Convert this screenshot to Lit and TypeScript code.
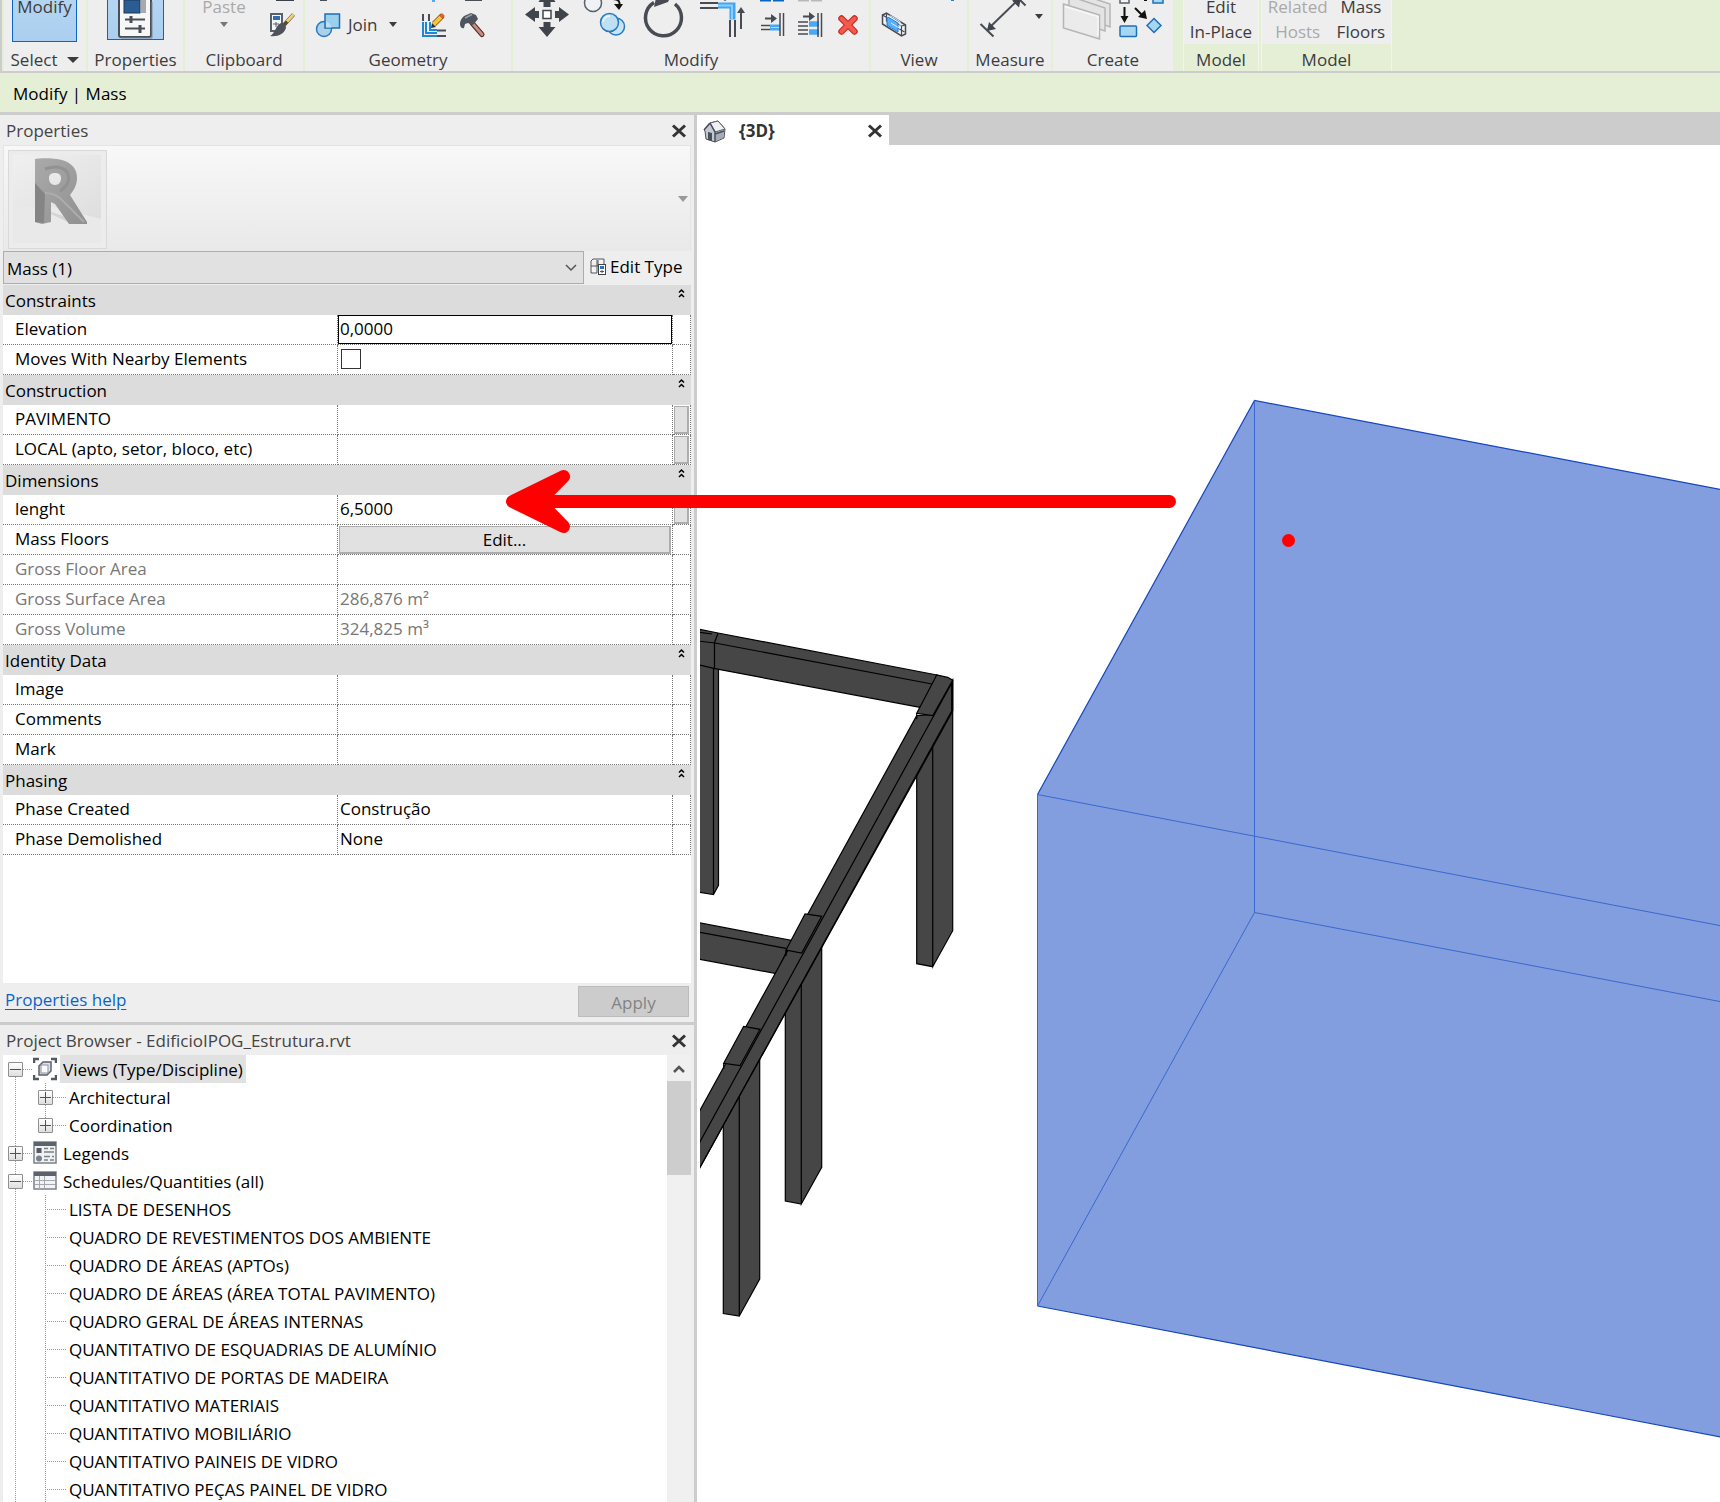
import { LitElement, html, svg, css, nothing, type TemplateResult, type SVGTemplateResult } from "lit";
import { customElement, property } from "lit/decorators.js";
import { classMap } from "lit/directives/class-map.js";

/** Ribbon glyph: all glyphs share the ribbon's own coordinate space, cut to a slice. */
const slice = (x: number, w: number, art: SVGTemplateResult) => html`
  <svg width=${w} height="45" viewBox="${x} 0 ${w} 45" aria-hidden="true">${art}</svg>`;

const cross = html`<svg width="16" height="16" viewBox="0 0 16 16" aria-hidden="true">
  <path d="M2 2.500 14 13.500M14 2.500 2 13.500" stroke="#333" stroke-width="3" fill="none" />
</svg>`;

const ICONS = {
  properties: svg`
    <rect x="119" y="-4" width="32" height="41" rx="2" fill="#f7f7f7" stroke="#4a4e57" stroke-width="2"/>
    <path d="M121 38h31v-36" fill="none" stroke="#7c8794" stroke-width="1"/>
    <rect x="124" y="0" width="16" height="13" fill="#2b5c92" stroke="#16395f"/>
    <rect x="141" y="0" width="5" height="13" fill="#a9a9ad"/>
    <path d="M125 19.500h20M125 28.500h20" stroke="#4a4e57" stroke-width="2"/>
    <path d="M131 16v7M140 25v8" stroke="#4a4e57" stroke-width="3"/>`,
  match: svg`
    <path d="M276 0h18v1h-18z" fill="#3c404c"/>
    <rect x="271" y="14" width="11" height="17" fill="#f4f6f8" stroke="#5a6068" stroke-width="2"/>
    <rect x="273" y="16" width="7" height="4" fill="#2f6db5"/>
    <path d="M273 24h6M276 22v5" stroke="#5a6068"/>
    <path d="M293.500 14.500 284 25" stroke="#5a4a2c" stroke-width="4"/>
    <path d="M293.500 14.500 287 21.500" stroke="#f0cf7a" stroke-width="3"/>
    <path d="M281 23c3 0 5 2 5 5-2 6-8 9-16 8 5-2 5-10 11-13z" fill="#4e525b"/>`,
  join: svg`
    <path d="M320 0h7v1h-7z" fill="#4a4e57"/>
    <circle cx="324" cy="29" r="7.500" fill="#a9d2ea" stroke="#2a7ac0" stroke-width="1.500"/>
    <rect x="325" y="14" width="14.500" height="14" fill="#9bd0ec" stroke="#1c6fb8" stroke-width="1.500"/>
    <path d="M326 21.500a8 8 0 0 1 5.500 6H326z" fill="#bfe0f2"/>`,
  cope: svg`
    <path d="M432 0h3v2h-3z" fill="#55a7f0"/>
    <path d="M423 14v7M429 14v7" stroke="#4a4e57" stroke-width="2"/>
    <path d="M423 22v14h14M426 22v11h11M430 22v8h7" stroke="#1e88d8" stroke-width="2" fill="none"/>
    <path d="M437 30.500h9M437 36h9" stroke="#4a4e57" stroke-width="2"/>
    <path d="m434 24 8.500-8.500" stroke="#7a4a10" stroke-width="5.500"/>
    <path d="m433.500 24.500 7.500-7.500" stroke="#f9c23c" stroke-width="4"/>
    <path d="m431 28 1-5 4 4z" fill="#2d3037"/>
    <path d="m441 17 2.500-2.500" stroke="#e0622c" stroke-width="4"/>`,
  hammer: svg`
    <path d="M465 0h17v1h-17z" fill="#4a4e57"/>
    <path d="m472 23 10 11.500" stroke="#4d2a25" stroke-width="5" stroke-linecap="round"/>
    <path d="m473 24 9 10.500" stroke="#c98b80" stroke-width="3" stroke-linecap="round"/>
    <path d="M460 24c0-3 1-5 4-8l7-3 5 2 2 4-5 6-3-1-2-1-3 1-1 4c-2 1-4-1-4-4z" fill="#4f555e"/>
    <path d="m465 18 7-3.500" stroke="#9aa1a9" stroke-width="1.500"/>`,
  move: svg`
    <g fill="#3f444d"><path d="M525 14.500 535 7v4h4v7h-4v4zM569 14.500 559 7v4h-4v7h4v4z"/>
    <path d="M547 37 538.500 27h5v-5h7v5h5zM538.500 2h17l-2-3h-13zM543.500 2h7v5h-7z"/></g>
    <rect x="543" y="10.500" width="8" height="8" fill="#fff" stroke="#3f444d" stroke-width="1.500"/>`,
  copy: svg`
    <circle cx="593" cy="3" r="8.500" fill="#f0f2f5" stroke="#5a5f68" stroke-width="1.500"/>
    <path d="M613-1c6 0 7 3 6.500 7" stroke="#111" stroke-width="2" fill="none"/><path d="m614 4 9 0-4 6z" fill="#111"/>
    <circle cx="616" cy="26.500" r="8.500" fill="#c6e6f8" stroke="#2a7ac0" stroke-width="1.500"/>
    <circle cx="609.500" cy="22.500" r="9" fill="#bfdff2" stroke="#2a7ac0" stroke-width="1.500"/>
    <path d="M603 22a7 7 0 0 1 7-6" stroke="#e9f7ff" stroke-width="2" fill="none"/>`,
  rotate: svg`
    <path d="M654 2.500A18 18 0 1 0 675 4" stroke="#474b53" stroke-width="3.500" fill="none"/>
    <path d="M656-2h14l-2 4-14 5z" fill="#474b53"/>`,
  trim: svg`
    <path d="M700 3h18M700 8h18" stroke="#474b53" stroke-width="2"/>
    <path d="M718 5.500h14.500v14" stroke="#45a5f5" stroke-width="6" fill="none"/>
    <path d="M718 5.500h14v14" stroke="#8cd0ff" stroke-width="2" fill="none"/>
    <path d="M730 20v17M735 20v17" stroke="#474b53" stroke-width="2"/>
    <path d="M741 29V9" stroke="#474b53" stroke-width="2"/><path d="m737 13 4-6 4 6z" fill="#474b53"/>
    <path d="M722-1h6l-3 2z" fill="#474b53"/>`,
  extendOne: svg`
    <path d="M760 0h11v1.500h-11zM773 0h11v1.500h-11z" fill="#0a66c2"/>
    <path d="M765 18.500h8" stroke="#474b53" stroke-width="2"/><path d="m771 14 6 4.500-6 4.500z" fill="#474b53"/>
    <path d="M761 25.500h9M761 29.500h9" stroke="#474b53" stroke-width="1.500"/>
    <path d="M770 27.500h10" stroke="#4aa8f5" stroke-width="6"/><path d="M771 27.500h9" stroke="#a4d8ff" stroke-width="1"/>
    <path d="M780 13v23M783.500 13v23" stroke="#474b53" stroke-width="1.500"/>`,
  extendMany: svg`
    <path d="M798 0h11v1.500h-11zM811 0h11v1.500h-11z" fill="#b9b9b9"/>
    <path d="M803 16.500h8" stroke="#474b53" stroke-width="2"/><path d="m809 12 6 4.500-6 4.500z" fill="#474b53"/>
    <path d="M798 22h10M798 26h10M798 30h10M798 34h10" stroke="#474b53" stroke-width="1.500"/>
    <path d="M809 24h10M809 32h10" stroke="#4aa8f5" stroke-width="5.500"/>
    <path d="M818 13v24M821.500 13v24" stroke="#474b53" stroke-width="1.500"/>`,
  remove: svg`
    <path d="m841.500 18.500 13 13m0-13-13 13" stroke="#c92f27" stroke-width="6.500" stroke-linecap="round"/>
    <path d="m841.500 18.500 13 13m0-13-13 13" stroke="#f4584f" stroke-width="4" stroke-linecap="round"/>`,
  view: svg`
    <path d="M951 0h3v1h-3z" fill="#1c7fe0"/>
    <path d="m882.500 15 4-2 19 12v9l-4 2-19-12z" fill="#f2f2f2" stroke="#474b53" stroke-width="1.500"/>
    <path d="m882.500 15 19 11v10M901.500 26l4-1M886.500 13v8l18 11" stroke="#474b53" stroke-width="1.200" fill="none"/>
    <path d="m887 16.500 11 6.500v9l-11-7z" fill="#5bb0fb" stroke="#1c7fe0"/>
    <path d="m887 16.500 4-.5 9 5.500v7l-9-5.500" stroke="#d9efff" fill="none"/>`,
  measure: svg`
    <path d="m988 29 32-31" stroke="#474b53" stroke-width="2"/>
    <path d="m980.500 24 13 12.500M1016-4l9.500 9.500" stroke="#474b53" stroke-width="2"/>
    <path d="m987 31 2-9 7 7zM1021-2l-9 2.500 7 7z" fill="#3f444d"/>`,
  assembly: svg`
    <g stroke="#b5b5b5" stroke-width="1.500" fill="#e4e4e4">
    <path d="m1074-8 36 12v23l-36-14z"/><path d="m1069-4 36 12v23l-36-12z"/><path d="m1063.500 4 36 11v24l-36-11z" fill="#ebebeb"/></g>
    <path d="M1065 6.500 1098 16.500v19" stroke="#f8f8f8" stroke-width="1.500" fill="none"/>`,
  group: svg`
    <rect x="1120" y="-6" width="9" height="9" fill="#f3f3f3" stroke="#5a5f68" stroke-width="1.500"/>
    <rect x="1153" y="-7" width="10" height="10" fill="#a7d6f0" stroke="#1c6fb8" stroke-width="1.500"/>
    <path d="M1144-1h3v2h-3z" fill="#111"/>
    <path d="M1124.500 7v10M1135 8l7 7" stroke="#111" stroke-width="2"/>
    <path d="M1120.500 16h8l-4 7zM1147 19l-9-2 7-7z" fill="#111"/>
    <rect x="1120" y="26" width="16.500" height="10.500" rx="1" fill="#a7d6f0" stroke="#1c6fb8" stroke-width="1.500"/>
    <path d="m1154 18.500 7 7-7 7-7-7z" fill="#a7d6f0" stroke="#1c6fb8" stroke-width="1.500"/>`,
};

const BASE = css`
  :host { font-family: "Open Sans", "Noto Sans", sans-serif; font-size: 17px; line-height: 24px; color: #000; }
  * { box-sizing: border-box; }
  svg { display: block; flex: none; }
  button { font: inherit; color: inherit; background: none; border: 0; padding: 0; cursor: pointer; }
  input, select { font: inherit; color: inherit; }
`;

@customElement("ribbon-bar")
class RibbonBar extends LitElement {
  static styles = [BASE, css`
    :host { display: flex; height: 73px; overflow: hidden; background: #e5efd6; border-bottom: 2px solid #ccc; border-left: 2px solid #ccc; padding-left: 2px; color: #3c3c3c; }
    .panel { display: flex; flex: none; flex-direction: column; background: #eee; border-right: 2px solid #e5efd6; }
    .tools { display: flex; height: 45px; align-items: flex-start; }
    .title { display: flex; height: 26px; align-items: center; justify-content: center; gap: 10px; padding-top: 3px; line-height: 23px; }
    .w82 { width: 84px; } .w95 { width: 97px; } .w118 { width: 120px; } .w206 { width: 208px; }
    .w356 { width: 358px; } .w96 { width: 98px; } .w120 { width: 122px; }
    .inset { padding: 0 8px; }
    .centred { justify-content: center; }
    .active { border: 1px solid #0a66c2; border-top: 0; background: linear-gradient(#b4d5f2, #abcff0); }
    .modify { width: 65px; height: 42px; display: flex; justify-content: center; }
    .modify span { margin-top: -5px; }
    .palette { width: 57px; height: 40px; overflow: hidden; }
    .stack { display: flex; flex-direction: column; align-items: center; margin-top: -6px; text-align: center; line-height: 25px; }
    .muted { color: #a9a9a9; }
    .caret { width: 0; border: 4px solid transparent; border-top: 5px solid currentColor; border-bottom: 0; }
    .caret.big { border-width: 6px 6px 0; }
    .paste { width: 64px; gap: 3px; margin-left: 7px; }
    .paste .caret { color: #777; }
    .joinBtn { display: flex; width: 93px; height: 45px; align-items: center; gap: 7px; }
    .joinBtn .word { padding-top: 5px; }
    .joinBtn .caret { margin: 4px 0 0 4px; }
    .measure { display: flex; height: 45px; }
    .measure .caret { margin: 14px 0 0 8px; }
    .gap { width: 6px; }
    .model { border-right: 1px solid #f1f5ea; border-left: 1px solid #f1f5ea; background: #e5efd6; margin-left: 2px; }
    .model .tools { height: 44px; background: #eee; }
    .model .title { height: 27px; }
    .one { width: 76px; } .two { width: 131px; }
    .two .tools { gap: 9px; }
  `];

  private panel(title: string, size: string, body: TemplateResult, toolClass = "", extra: unknown = nothing) {
    return html`<section class="panel ${size}" aria-label=${title}>
      <div class="tools ${toolClass}">${body}</div>
      <div class="title"><span>${title}</span>${extra}</div>
    </section>`;
  }

  private tool(name: string, x: number, w: number, art: SVGTemplateResult) {
    return html`<button type="button" aria-label=${name}>${slice(x, w, art)}</button>`;
  }

  render() {
    return html`
      ${this.panel("Select", "w82", html`<button type="button" class="active modify"><span>Modify</span></button>`, "inset", html`<span class="caret big"></span>`)}
      ${this.panel("Properties", "w95", html`<button type="button" class="active palette" aria-label="Properties">${slice(108, 55, ICONS.properties)}</button>`, "centred")}
      ${this.panel("Clipboard", "w118", html`
        <button type="button" class="stack paste muted" disabled><span>Paste</span><span class="caret"></span></button>
        ${this.tool("Match type", 256, 44, ICONS.match)}`)}
      ${this.panel("Geometry", "w206", html`
        <button type="button" class="joinBtn">${slice(313, 28, ICONS.join)}<span class="word">Join</span><span class="caret"></span></button>
        ${this.tool("Cope", 406, 48, ICONS.cope)}${this.tool("Demolish", 454, 40, ICONS.hammer)}`, "inset")}
      ${this.panel("Modify", "w356", html`
        ${this.tool("Move", 521, 56, ICONS.move)}${this.tool("Copy", 577, 58, ICONS.copy)}
        ${this.tool("Rotate", 635, 57, ICONS.rotate)}${this.tool("Trim to corner", 692, 60, ICONS.trim)}
        ${this.tool("Extend one", 752, 38, ICONS.extendOne)}${this.tool("Extend many", 790, 40, ICONS.extendMany)}
        ${this.tool("Delete", 830, 31, ICONS.remove)}`, "inset")}
      ${this.panel("View", "w96", this.tool("Selection box", 879, 80, ICONS.view), "inset")}
      ${this.panel("Measure", "w82", html`<button type="button" class="measure" aria-label="Measure">${slice(977, 50, ICONS.measure)}<span class="caret"></span></button>`, "inset")}
      ${this.panel("Create", "w120", html`${this.tool("Create assembly", 1061, 54, ICONS.assembly)}${this.tool("Create group", 1115, 52, ICONS.group)}`, "inset")}
      <div class="gap"></div>
      ${this.panel("Model", "model one", html`<button type="button" class="stack"><span>Edit</span><span>In-Place</span></button>`, "centred")}
      ${this.panel("Model", "model two", html`
        <button type="button" class="stack muted" disabled><span>Related</span><span>Hosts</span></button>
        <button type="button" class="stack"><span>Mass</span><span>Floors</span></button>`, "centred")}
    `;
  }
}

type Row = { label: string; value?: string; kind?: "boxed" | "check" | "button" | "text"; muted?: boolean; more?: boolean };
type Group = { title: string; rows: Row[] };

const GROUPS: Group[] = [
  { title: "Constraints", rows: [
    { label: "Elevation", value: "0,0000", kind: "boxed" },
    { label: "Moves With Nearby Elements", kind: "check" },
  ] },
  { title: "Construction", rows: [
    { label: "PAVIMENTO", kind: "text", more: true },
    { label: "LOCAL (apto, setor, bloco, etc)", kind: "text", more: true },
  ] },
  { title: "Dimensions", rows: [
    { label: "lenght", value: "6,5000", kind: "text", more: true },
    { label: "Mass Floors", value: "Edit...", kind: "button" },
    { label: "Gross Floor Area", muted: true },
    { label: "Gross Surface Area", value: "286,876 m²", muted: true },
    { label: "Gross Volume", value: "324,825 m³", muted: true },
  ] },
  { title: "Identity Data", rows: [
    { label: "Image" },
    { label: "Comments", kind: "text" },
    { label: "Mark", kind: "text" },
  ] },
  { title: "Phasing", rows: [
    { label: "Phase Created", value: "Construção" },
    { label: "Phase Demolished", value: "None" },
  ] },
];

@customElement("properties-panel")
class PropertiesPanel extends LitElement {
  static styles = [BASE, css`
    :host { display: flex; flex: none; flex-direction: column; background: #eee; padding: 0 3px; border-bottom: 3px solid #ccc; }
    .head { display: flex; height: 30px; align-items: center; justify-content: space-between; padding: 2px 4px 0 3px; color: #444; }
    .preview { display: flex; height: 106px; align-items: center; justify-content: space-between; padding: 1px 2px 0 4px; border: 1px solid #e4e4e4; border-width: 1px 1px 0; background: linear-gradient(#f8f8f8, #e9e9e9); }
    .drop { border: 5px solid transparent; border-top: 6px solid #999; border-bottom: 0; }
    .type { display: flex; height: 34px; align-items: stretch; }
    .pick { position: relative; display: flex; flex: 1; }
    .pick select { flex: 1; appearance: none; border: 1px solid #adadad; border-radius: 0; background: #e1e1e1; padding: 2px 3px 0; margin-bottom: 1px; }
    .pick svg { position: absolute; right: 7px; top: 12px; pointer-events: none; }
    .edit { display: flex; width: 107px; align-items: center; gap: 4px; padding: 0 0 3px 6px; white-space: nowrap; }
    table { width: 100%; table-layout: fixed; border-collapse: separate; border-spacing: 0; background: #fff; }
    .c1 { width: 335px; } .c3 { width: 18px; }
    th, td { height: 30px; padding: 0; text-align: left; font-weight: 400; }
    .group th { background: #dcdcdc; }
    .bar { display: flex; height: 30px; justify-content: space-between; padding: 0 5px 0 2px; line-height: 32px; }
    .bar svg { margin-top: 2px; }
    .row th, .row td { border-bottom: 1px dotted #777; border-right: 1px dotted #777; overflow: hidden; white-space: nowrap; }
    .row th { padding: 0 0 2px 12px; }
    .row td { padding: 0 0 2px 2px; }
    .row td.full { padding: 0; }
    .muted { color: #777; }
    td input[type="text"] { display: block; width: 100%; height: 29px; border: 0; padding: 0 2px 2px; background: none; }
    td input[type="text"].boxed { border: 1px solid #000; padding: 0 1px 2px; }
    .check { display: block; appearance: none; width: 20px; height: 20px; margin: 0 0 2px 3px; border: 1px solid #333; background: #fff; }
    .push { display: block; width: calc(100% - 2px); height: 28px; margin: 1px 1px 0; background: #e1e1e1; border: 1px solid #adadad; border-bottom-width: 2px; border-right-width: 2px; }
    .rest { height: 128px; background: #fff; }
    .foot { display: flex; height: 39px; align-items: flex-start; justify-content: space-between; padding: 3px 2px 0; }
    .foot a { color: #0a64c8; line-height: 28px; text-underline-offset: 3px; }
    .apply { width: 111px; height: 31px; background: #ccc; border: 1px solid #bcbcbc; color: #838383; padding-top: 2px; }
  `];

  private cell(r: Row, id: string) {
    switch (r.kind) {
      case "boxed": return html`<input id=${id} class="boxed" type="text" .value=${r.value ?? ""} />`;
      case "text": return html`<input id=${id} type="text" .value=${r.value ?? ""} />`;
      case "check": return html`<input id=${id} class="check" type="checkbox" />`;
      case "button": return html`<button id=${id} type="button" class="push">${r.value}</button>`;
      default: return r.value ?? nothing;
    }
  }

  private row(r: Row, id: string) {
    const full = r.kind !== undefined;
    return html`<tr class=${classMap({ row: true, muted: !!r.muted })}>
      <th scope="row">${full ? html`<label for=${id}>${r.label}</label>` : r.label}</th>
      <td class=${classMap({ full })}>${this.cell(r, id)}</td>
      <td class="full">${r.more ? html`<button type="button" class="push" aria-label="Associate ${r.label}"></button>` : nothing}</td>
    </tr>`;
  }

  render() {
    return html`
      <div class="head"><span>Properties</span><button type="button" aria-label="Close properties">${cross}</button></div>
      <div class="preview">
        <svg width="99" height="99" viewBox="0 0 99 99" aria-hidden="true">
          <defs>
            <linearGradient id="wall" x1="0" y1="0" x2="1" y2="1"><stop offset="0" stop-color="#f0f0f0"/><stop offset="1" stop-color="#dedede"/></linearGradient>
            <linearGradient id="face" x1="0" y1="0" x2="1" y2="1"><stop offset="0" stop-color="#aaa"/><stop offset="1" stop-color="#909090"/></linearGradient>
          </defs>
          <rect x=".5" y=".5" width="98" height="98" fill="#ececec" stroke="#d9d9d9"/>
          <path d="M5 5h88v64L44 57 5 58z" fill="url(#wall)"/>
          <path d="m44 57 49 12v24H5V58z" fill="#e9e9e9"/>
          <path d="m43 62 34 11-17-1-17-8z" fill="#d4d4d4"/>
          <path fill-rule="evenodd" d="M27 9c5-1 20-1 27 1 10 3 15 9 15 18 0 8-4 13-7 17l17 27v2H61L47 54l-4-2v20l-9 2-7-2zM41 28c0 4 2 7 6 7s6-3 6-7-3-5-6-5-6 1-6 5z" fill="url(#face)"/>
          <path d="m27 33 10 11-1 29-9-1z" fill="#858585"/>
          <path d="M37 19c9-3 17-3 22 3 4 7 0 15-7 19" fill="none" stroke="#929292" stroke-width="3"/>
          <path d="M37 43c8 0 14 3 19 9l20 20" fill="none" stroke="#acacac" stroke-width="2"/>
        </svg>
        <span class="drop"></span>
      </div>
      <div class="type">
        <div class="pick">
          <select aria-label="Type selector"><option>Mass (1)</option></select>
          <svg width="12" height="10" viewBox="0 0 12 10" aria-hidden="true"><path d="m1 2 5 5 5-5" fill="none" stroke="#555" stroke-width="1.500"/></svg>
        </div>
        <button type="button" class="edit">
          <svg width="16" height="17" viewBox="0 0 16 17" aria-hidden="true">
            <path d="M1 3 3 1h11v6M1 3v12h6M1 8h7M7 15V2M8 2v6" fill="#f4f4f4" stroke="#50555e"/>
            <rect x="8.500" y="6.500" width="7" height="10" fill="#fff" stroke="#3f444d"/><rect x="10" y="8" width="4" height="3" fill="#2b6fc0"/>
            <path d="M10 13.500h4M12 12v3" stroke="#50555e"/>
          </svg>Edit Type
        </button>
      </div>
      <table>
        <colgroup><col class="c1" /><col /><col class="c3" /></colgroup>
        ${GROUPS.map((g, gi) => html`<tbody>
          <tr class="group"><th scope="rowgroup" colspan="3"><div class="bar"><span>${g.title}</span>
            <svg width="9" height="12" viewBox="0 0 9 12" aria-hidden="true"><path d="M2 5.500 4.500 3 7 5.500M2 10 4.500 7.500 7 10" fill="none" stroke="#000" stroke-width="1.500"/></svg>
          </div></th></tr>
          ${g.rows.map((r, i) => this.row(r, `f${gi}-${i}`))}
        </tbody>`)}
      </table>
      <div class="rest"></div>
      <div class="foot"><a href="#help">Properties help</a><button type="button" class="apply" disabled>Apply</button></div>
    `;
  }
}

type Node = { label: string; depth: 0 | 1; box?: "+" | "-"; icon?: "views" | "legends" | "schedules"; selected?: boolean; last?: boolean };

const leaf = (label: string): Node => ({ label, depth: 1 });
const NODES: Node[] = [
  { label: "Views (Type/Discipline)", depth: 0, box: "-", icon: "views", selected: true },
  { label: "Architectural", depth: 1, box: "+" },
  { label: "Coordination", depth: 1, box: "+", last: true },
  { label: "Legends", depth: 0, box: "+", icon: "legends" },
  { label: "Schedules/Quantities (all)", depth: 0, box: "-", icon: "schedules" },
  leaf("LISTA DE DESENHOS"),
  leaf("QUADRO DE REVESTIMENTOS DOS AMBIENTE"),
  leaf("QUADRO DE ÁREAS (APTOs)"),
  leaf("QUADRO DE ÁREAS (ÁREA TOTAL PAVIMENTO)"),
  leaf("QUADRO GERAL DE ÁREAS INTERNAS"),
  leaf("QUANTITATIVO DE ESQUADRIAS DE ALUMÍNIO"),
  leaf("QUANTITATIVO DE PORTAS DE MADEIRA"),
  leaf("QUANTITATIVO MATERIAIS"),
  leaf("QUANTITATIVO MOBILIÁRIO"),
  leaf("QUANTITATIVO PAINEIS DE VIDRO"),
  leaf("QUANTITATIVO PEÇAS PAINEL DE VIDRO"),
];

const TREE_ICONS = {
  views: svg`<path d="M1 6V2h5M18 2h5v4M1 18v4h5M18 22h5v-4" fill="none" stroke="#555a62" stroke-width="2.500"/>
    <path d="m6 9 4-4h8v9l-4 4H6z" fill="#dfe3e8" stroke="#5a606a" stroke-width="1.500"/><rect x="8" y="8" width="7" height="8" fill="#f7f9fb" stroke="#8d949d"/>`,
  legends: svg`<rect x="1" y="1" width="22" height="21" fill="#eff1f3" stroke="#7b818a" stroke-width="1.500"/><rect x="1" y="1" width="22" height="4" fill="#5d636d"/>
    <rect x="3.500" y="7" width="5" height="5" fill="#555b66"/><circle cx="6" cy="17.500" r="3" fill="#7b818a"/>
    <path d="M11 7.500h4m2 0h4M11 11h10M11 15.500h6m2 0h2M11 19h4m2 0h4" stroke="#7b818a" stroke-width="1.500"/>`,
  schedules: svg`<rect x="1" y="3" width="22" height="17" fill="#f2f3f4" stroke="#7b818a" stroke-width="1.500"/><rect x="1" y="3" width="22" height="4" fill="#5d636d"/>
    <path d="M2 11.500h20M2 15.500h20M6.500 7v13M11.500 7v13" stroke="#a4a9b0" stroke-width="1"/>`,
};

@customElement("project-browser")
class ProjectBrowser extends LitElement {
  @property() file = "EdificioIPOG_Estrutura.rvt";

  static styles = [BASE, css`
    :host { display: flex; flex: 1; min-height: 0; flex-direction: column; background: #eee; padding: 0 3px; }
    .head { display: flex; flex: none; height: 30px; align-items: center; justify-content: space-between; padding: 2px 4px 0 3px; color: #444; }
    .body { display: flex; flex: 1; min-height: 0; background: #fff; }
    ul { flex: 1; margin: 0; padding: 0; list-style: none; overflow: hidden; }
    li { display: flex; height: 28px; white-space: nowrap; align-items: center; }
    .rail { display: flex; flex: none; width: 30px; height: 28px; align-items: center; background-repeat: no-repeat; }
    .v { --v: repeating-linear-gradient(to bottom, #999 0 1px, transparent 1px 2px); }
    .h { --h: repeating-linear-gradient(to right, #999 0 1px, transparent 1px 2px); }
    .rail { background-image: var(--v, none), var(--h, none); background-position: 12px 0, 12px 14px; background-size: 1px 28px, 100% 1px; }
    .rail.first { background-position: 12px 14px, 12px 14px; }
    .rail.last { background-size: 1px 14px, 100% 1px; }
    .rail.wide { width: 33px; }
    .box { display: block; width: 15px; height: 15px; margin-left: 5px; border: 1px solid #8f8f8f; border-radius: 1px; background: linear-gradient(#fff, #dedede); }
    .icon { width: 27px; }
    .label { padding: 1px 3px 0; line-height: 28px; height: 28px; }
    .selected { background: #e1e1e1; }
    .scroll { flex: none; width: 24px; background: #f0f0f0; }
    .scroll button { display: flex; width: 24px; height: 26px; align-items: center; justify-content: center; padding-top: 2px; }
    .thumb { height: 94px; background: #cdcdcd; }
  `];

  private box(n: Node) {
    return html`<button type="button" class="box" aria-label="${n.box === "+" ? "Expand" : "Collapse"} ${n.label}">
      <svg width="13" height="13" viewBox="0 0 13 13" aria-hidden="true"><path d=${n.box === "+" ? "M1 6.5h11M6.5 1v11" : "M1 6.5h11"} stroke="#3a4f95" /></svg>
    </button>`;
  }

  private node(n: Node, i: number) {
    return html`<li>
      <span class=${classMap({ rail: true, v: true, h: n.depth === 0, first: i === 0 })}>${n.depth === 0 ? this.box(n) : nothing}</span>
      ${n.depth === 1 ? html`<span class=${classMap({ rail: true, wide: true, v: true, h: true, last: !!n.last })}>${n.box ? this.box(n) : nothing}</span>` : nothing}
      ${n.icon ? html`<span class="icon"><svg width="24" height="24" viewBox="0 0 24 24" aria-hidden="true">${TREE_ICONS[n.icon]}</svg></span>` : nothing}
      <span class=${classMap({ label: true, selected: !!n.selected })}>${n.label}</span>
    </li>`;
  }

  render() {
    return html`
      <div class="head"><span>Project Browser - ${this.file}</span><button type="button" aria-label="Close project browser">${cross}</button></div>
      <div class="body">
        <ul>${NODES.map((n, i) => this.node(n, i))}</ul>
        <div class="scroll">
          <button type="button" aria-label="Scroll up"><svg width="14" height="10" viewBox="0 0 14 10" aria-hidden="true"><path d="m2 8 5-5 5 5" fill="none" stroke="#555" stroke-width="2.500"/></svg></button>
          <div class="thumb"></div>
        </div>
      </div>
    `;
  }
}

@customElement("model-view")
class ModelView extends LitElement {
  static styles = [BASE, css`
    :host { display: flex; flex: 1; min-width: 0; flex-direction: column; background: #fff; }
    .tabs { display: flex; flex: none; height: 30px; background: #ccc; }
    .tab { display: flex; width: 192px; align-items: center; justify-content: space-between; background: #fff; padding: 2px 6px 0; color: #333; }
    .name { display: flex; align-items: center; gap: 13px; font-weight: 700; }
    .canvas { flex: 1; min-height: 0; overflow: hidden; padding-left: 3px; }
    .canvas svg { width: 100%; height: 100%; }
    .solid { fill: #464646; stroke: #000; stroke-width: 1.2; }
    .edge { fill: none; stroke: #000; stroke-width: 1.2; }
    .mass { fill: #829edf; }
    .outline { fill: none; stroke: #1546bb; stroke-width: 1.2; }
    .inner { fill: none; stroke: #3a67d0; stroke-width: 1; }
  `];

  render() {
    return html`
      <div class="tabs"><div class="tab">
        <span class="name">
          <svg width="23" height="23" viewBox="0 0 23 23" aria-hidden="true">
            <path d="m1 10 6-7 8-2 7 8-1 9-9 4-9-3-1-8z" fill="#c3c9d2" stroke="#4a4f58"/>
            <path d="M7 3 15 1l7 8-10 3z" fill="#eef1f4" stroke="#5a606a"/>
            <path d="m12 13 9-3-1 8-8 3z" fill="#a5acb6"/>
            <path d="m7 3 5 9v10M1 10l6-7M12 14l9-3" fill="none" stroke="#4a4f58" stroke-width="1.500"/>
            <path d="M5 20v-8l4 1v8z" fill="#4a4f58"/>
          </svg>{3D}</span>
        <button type="button" aria-label="Close view">${cross}</button>
      </div></div>
      <div class="canvas">
        <svg role="img" aria-label="Structural frame and selected mass">
          <g transform="translate(-700 -145)">
            <g class="solid">
              <path d="M698 640h15.500v254.500L698 892zM713.500 668h5v217.300l-5 9.200z"/>
              <path d="m698 629 20 4 219 42 15.700 5.300-18 36-14.700-9-205-38.600-17-4z"/>
              <path d="m698 922.500 94 18-16 33-78-14.500z"/>
              <path d="M916.700 740v223.700l16 3V740zM932.700 716v250.700l20-36V680z"/>
              <path d="M785.300 980v221l16 3V960zM801.300 960v244l20.400-36.700V930z"/>
              <path d="M723.300 1090v223.500l16 2.500v-240zM739.300 1080v236l20.400-37V1040z"/>
              <path d="M951.700 683v28L698 1171v-57l218.700-398.300 16-1z"/>
              <path d="M936.700 675 916.700 713.300l16 2.400 20-35.400-5-3z"/>
              <path d="m805 914-19 36 15.700 3 20-36.700zM743.700 1026.300l-20 37 16.300 2.400 20-36.400z"/>
            </g>
            <path class="edge" d="m698 641 17 2 217 41M714.500 642v27M718 633.300l-3.500 9.400M698 932l88 16.300M952.700 681v30M951.700 683 698 1145.300M952.700 711 698 1171M786 950v6M723.700 1063v6M916.700 713v6M698 632l14 2"/>
            <path class="mass" d="M1254.500 400.500 2300 600v948L1037.500 1306V794.500z"/>
            <path class="outline" d="M2300 600 1254.500 400.500l-217 394M1037.500 1306 2300 1548"/>
            <path class="inner" d="M1037.500 1306V794.500L2300 1037M1254.500 400.500v512l1045.500 200M1254.500 912.500l-217 393.500"/>
            <circle cx="1288.500" cy="540.500" r="6.500" fill="red"/>
          </g>
        </svg>
      </div>
    `;
  }
}

@customElement("app-root")
class AppRoot extends LitElement {
  static styles = [BASE, css`
    :host { display: flex; flex-direction: column; height: 100vh; overflow: hidden; position: relative; background: #fff; }
    .context { display: flex; flex: none; height: 42px; align-items: center; padding: 2px 13px 0; background: #e5efd6; border-bottom: 3px solid #ccc; }
    .work { display: flex; flex: 1; min-height: 0; }
    .dock { display: flex; flex: none; width: 697px; flex-direction: column; border-right: 3px solid #ccc; }
    .callout { position: absolute; left: 500px; top: 465px; pointer-events: none; }
  `];

  render() {
    return html`
      <ribbon-bar></ribbon-bar>
      <div class="context">Modify | Mass</div>
      <div class="work">
        <aside class="dock"><properties-panel></properties-panel><project-browser></project-browser></aside>
        <model-view></model-view>
      </div>
      <svg class="callout" width="680" height="74" viewBox="500 465 680 74" aria-hidden="true">
        <path d="M512.500 501.500 563.500 476.500 539 501.500 563.500 526.500zM539 501.500h630.500" fill="red" stroke="red" stroke-width="13" stroke-linejoin="round" stroke-linecap="round"/>
      </svg>
    `;
  }
}
